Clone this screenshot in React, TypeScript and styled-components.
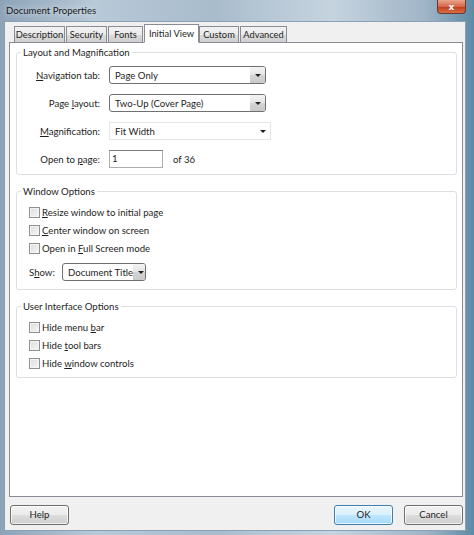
import React from 'react';
import styled, {createGlobalStyle} from 'styled-components';

const GlobalStyle = createGlobalStyle`
  html, body {
    margin: 0;
    padding: 0;
  }
  body {
    font-family: Lato, "Noto Sans", sans-serif;
    font-size: 9.6px;
    color: #1e1e1e;
  }
`

const Window = styled.div`
  width: 474px;
  height: 535px;
  display: flex;
  flex-direction: column;
  background: linear-gradient(90deg, #8da3b8 0%, #b8c9d8 20%, #a9bccc 45%, #c6d4e0 70%, #9fb4c6 90%, #5f8aa6 100%);
  box-sizing: border-box;
  overflow: hidden;
`

const TitleBar = styled.div`
  height: 21px;
  display: flex;
  align-items: flex-start;
  justify-content: space-between;
  padding: 0 8px 0 6px;
`

const Title = styled.span`
  line-height: 22px;
  color: #1a1a1a;
  text-shadow: 0 0 6px rgba(255,255,255,0.9);
`

const CloseButton = styled.div`
  width: 29px;
  height: 14px;
  border: 1px solid #6b3a2e;
  border-top: none;
  border-radius: 0 0 4px 4px;
  background: linear-gradient(180deg, #e9a58f 0%, #d5664a 50%, #c3401f 55%, #d86f47 100%);
  display: flex;
  align-items: center;
  justify-content: center;
  color: #fff;
  font-family: "DejaVu Sans", sans-serif;
  font-weight: bold;
  font-size: 9px;
  box-sizing: border-box;
`

const Body = styled.div`
  flex: 1;
  margin: 0 8px 7px 4px;
  background: #f0f0f0;
  border: 1px solid #8aa0b4;
  display: flex;
  flex-direction: column;
  padding: 2px 2px 0 4px;
  box-sizing: border-box;
`

const TabRow = styled.div`
  display: flex;
  align-items: flex-end;
  height: 18px;
  padding-left: 5px;
  position: relative;
  z-index: 1;
`

const Tab = styled.div<{active?: boolean; w: number; gap: number}>`
  width: ${p => p.w}px;
  height: ${p => (p.active ? '19px' : '16px')};
  line-height: ${p => (p.active ? '17px' : '16px')};
  text-align: center;
  font-size: 9.3px;
  margin-right: ${p => p.gap}px;
  border: 1px solid #898c95;
  border-bottom: ${p => (p.active ? '1px solid #fff' : 'none')};
  background: ${p => (p.active ? '#fff' : 'linear-gradient(180deg, #f2f2f2 0%, #ebebeb 50%, #dcdcdc 51%, #cfcfcf 100%)')};
  white-space: nowrap;
  box-sizing: border-box;
  margin-bottom: ${p => (p.active ? '-1px' : '0')};
`

const Panel = styled.div`
  background: #fff;
  border: 1px solid #898c95;
  height: 455px;
  padding: 4px 5px 0 6px;
  box-sizing: border-box;
  display: flex;
  flex-direction: column;
  gap: 11px;
`

const Group = styled.fieldset<{h: number}>`
  margin: 0;
  height: ${p => p.h}px;
  border: 1px solid #dcdfe3;
  border-radius: 3px;
  padding: 0 0 0 12px;
  box-sizing: border-box;
`

const Legend = styled.legend`
  padding: 0 2px;
  margin-left: -8px;
  color: #1e1e1e;
`

const FormRow = styled.div<{top?: number}>`
  display: flex;
  align-items: center;
  height: 18px;
  margin-top: ${p => (p.top ?? 10)}px;
`

const Label = styled.span<{w: number; left?: boolean}>`
  width: ${p => p.w}px;
  text-align: ${p => (p.left ? 'left' : 'right')};
  padding-right: 9px;
  box-sizing: border-box;
  white-space: nowrap;
`

const U = styled.span`
  text-decoration: underline;
`

const Combo = styled.div<{w: number; flat?: boolean}>`
  width: ${p => p.w}px;
  height: 18px;
  display: flex;
  align-items: center;
  justify-content: space-between;
  border: 1px solid ${p => (p.flat ? '#e6e6e6' : '#707070')};
  border-radius: ${p => (p.flat ? '0' : '3px')};
  background: #fff;
  box-sizing: border-box;
  padding-left: 5px;
  overflow: hidden;
  white-space: nowrap;
`

const ComboArrow = styled.div<{flat?: boolean}>`
  width: 15px;
  height: 100%;
  flex-shrink: 0;
  display: flex;
  align-items: center;
  justify-content: center;
  background: ${p => (p.flat ? 'transparent' : 'linear-gradient(180deg, #f4f4f4 0%, #e4e4e4 50%, #d4d4d4 51%, #cacaca 100%)')};
  &::after {
    content: '';
    border-left: 3px solid transparent;
    border-right: 3px solid transparent;
    border-top: 3px solid #1e1e1e;
  }
`

const TextInput = styled.div`
  width: 54px;
  height: 18px;
  border: 1px solid #acacac;
  border-top-color: #7a7a7a;
  box-sizing: border-box;
  padding-left: 2px;
  line-height: 16px;
`

const Suffix = styled.span`
  margin-left: 10px;
`

const CheckRow = styled.div`
  display: flex;
  align-items: center;
  height: 18px;
  gap: 2px;
`

const CheckBox = styled.div`
  width: 11px;
  height: 11px;
  border: 1px solid #8e8f8f;
  box-sizing: border-box;
  background: linear-gradient(135deg, #dcdcdc 0%, #f6f6f6 100%);
  box-shadow: inset 0 0 0 1px #f4f4f4;
`

const CheckList = styled.div`
  display: flex;
  flex-direction: column;
  margin-top: 6px;
`

const Spacer = styled.div`
  flex: 1;
`

const Footer = styled.div`
  height: 31px;
  display: flex;
  align-items: center;
  padding: 2px 0 0 1px;
  gap: 11px;
`

const Button = styled.div<{focus?: boolean}>`
  width: 59px;
  height: 20px;
  border: 1px solid ${p => (p.focus ? '#3c7fb1' : '#707070')};
  border-radius: 3px;
  box-sizing: border-box;
  background: ${p => (p.focus
    ? 'linear-gradient(180deg, #eaf6fd 0%, #d9f0fc 50%, #bee6fd 51%, #a7d9f5 100%)'
    : 'linear-gradient(180deg, #f2f2f2 0%, #ebebeb 50%, #dddddd 51%, #cfcfcf 100%)')};
  box-shadow: inset 0 0 0 1px rgba(255,255,255,0.7);
  display: flex;
  align-items: center;
  justify-content: center;
`

const tabs = [
  {label: 'Description', w: 51, gap: 1},
  {label: 'Security', w: 41, gap: 1},
  {label: 'Fonts', w: 35, gap: 1},
  {label: 'Initial View', w: 55, gap: 0},
  {label: 'Custom', w: 40, gap: 1},
  {label: 'Advanced', w: 47, gap: 0},
];

const App = () => {
  return (
    <Window>
      <GlobalStyle />
      <TitleBar>
        <Title>Document Properties</Title>
        <CloseButton>x</CloseButton>
      </TitleBar>
      <Body>
        <TabRow>
          {tabs.map(t => (
            <Tab key={t.label} w={t.w} gap={t.gap} active={t.label === 'Initial View'}>{t.label}</Tab>
          ))}
        </TabRow>
        <Panel>
          <Group h={128}>
            <Legend>Layout and Magnification</Legend>
            <FormRow top={8}>
              <Label w={80}><U>N</U>avigation tab:</Label>
              <Combo w={157}>Page Only<ComboArrow /></Combo>
            </FormRow>
            <FormRow>
              <Label w={80}>Page <U>l</U>ayout:</Label>
              <Combo w={157}>Two-Up (Cover Page)<ComboArrow /></Combo>
            </FormRow>
            <FormRow>
              <Label w={80}><U>M</U>agnification:</Label>
              <Combo w={162} flat>Fit Width<ComboArrow flat /></Combo>
            </FormRow>
            <FormRow>
              <Label w={80}>Open to <U>p</U>age:</Label>
              <TextInput>1</TextInput>
              <Suffix>of 36</Suffix>
            </FormRow>
          </Group>
          <Group h={104}>
            <Legend>Window Options</Legend>
            <CheckList>
              <CheckRow><CheckBox /><span><U>R</U>esize window to initial page</span></CheckRow>
              <CheckRow><CheckBox /><span><U>C</U>enter window on screen</span></CheckRow>
              <CheckRow><CheckBox /><span>Open in <U>F</U>ull Screen mode</span></CheckRow>
            </CheckList>
            <FormRow top={6}>
              <Label w={33} left>S<U>h</U>ow:</Label>
              <Combo w={84}>Document Title<ComboArrow /></Combo>
            </FormRow>
          </Group>
          <Group h={77}>
            <Legend>User Interface Options</Legend>
            <CheckList>
              <CheckRow><CheckBox /><span>Hide menu <U>b</U>ar</span></CheckRow>
              <CheckRow><CheckBox /><span>Hide <U>t</U>ool bars</span></CheckRow>
              <CheckRow><CheckBox /><span>Hide <U>w</U>indow controls</span></CheckRow>
            </CheckList>
          </Group>
        </Panel>
        <Footer>
          <Button>Help</Button>
          <Spacer />
          <Button focus>OK</Button>
          <Button>Cancel</Button>
        </Footer>
      </Body>
    </Window>
  );
};

export default App;
